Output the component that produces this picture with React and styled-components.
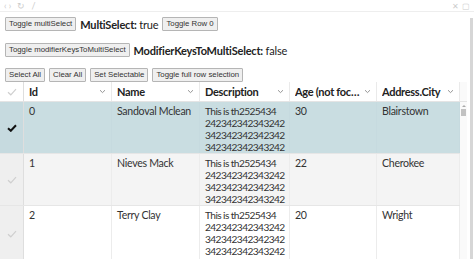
import React from "react";
import styled, { createGlobalStyle } from "styled-components";

const Global = createGlobalStyle`
  body {
    margin: 0;
    background: #fff;
    font-family: "Lato", "Noto Sans", sans-serif;
    color: #222;
    overflow: hidden;
  }
`;

const Page = styled.div`
  width: 474px;
  height: 259px;
  position: relative;
  overflow: hidden;
`;

const BrowserBar = styled.div`
  height: 11px;
  display: flex;
  align-items: center;
  gap: 6px;
  padding-left: 4px;
  border-bottom: 1px solid #eee;
  color: #ccc;
  font-size: 9px;
`;

const WindowIcons = styled.div`
  margin-left: auto;
  margin-right: 4px;
  display: flex;
  gap: 3px;
  color: #ccc;
  font-size: 8px;
`;

const PageScroll = styled.div`
  position: absolute;
  right: 1px;
  top: 18px;
  bottom: 0;
  width: 3px;
  background: #d6d6d6;
`;

const Controls = styled.div`
  padding: 5px 5px 0;
  display: flex;
  flex-direction: column;
`;

const Line = styled.div`
  display: flex;
  align-items: center;
  gap: 4px;
  height: 14px;
  margin-bottom: ${(p) => p.mb || 0}px;
`;

const Btn = styled.button`
  font-family: "Liberation Sans", Arial, sans-serif;
  font-size: 7.8px;
  color: #333;
  background: #efefef;
  border: 1px solid #b5b5b5;
  border-radius: 1px;
  height: 14px;
  padding: 0 3px;
  line-height: 12px;
  white-space: nowrap;
`;

const Status = styled.span`
  font-size: 11px;
  letter-spacing: -0.2px;
  color: #222;
  white-space: nowrap;
  b {
    font-weight: 700;
  }
`;

const Grid = styled.div`
  width: 467px;
  display: flex;
  flex-direction: column;
  position: relative;
`;

const cols = "24px 88px 88px 90px 87px 83px 7px";

const HeaderRow = styled.div`
  display: grid;
  grid-template-columns: ${cols};
  height: 19px;
  border-bottom: 1px solid #e4e4e4;
`;

const HeadCell = styled.div`
  display: flex;
  align-items: center;
  gap: 1px;
  padding: 0 5px 0 5px;
  font-size: 11px;
  letter-spacing: -0.3px;
  font-weight: 700;
  color: #222;
  border-right: 1px solid #eaeaea;
  min-width: 0;
  span {
    flex: 1;
    white-space: nowrap;
    overflow: hidden;
    text-overflow: ellipsis;
  }
`;

const SelCell = styled.div`
  display: flex;
  align-items: center;
  justify-content: center;
  background: ${(p) => (p.head ? "#fff" : p.selected ? "#c6dadf" : "#efefef")};
  border-right: 1px solid #dedede;
`;

const Row = styled.div`
  display: grid;
  grid-template-columns: ${cols};
  height: ${(p) => p.h}px;
  background: ${(p) => p.bg};
  border-bottom: 1px solid #e6e6e6;
`;

const Cell = styled.div`
  padding: 3px 3px 0 5px;
  font-size: ${(p) => (p.digits ? "10.2px" : "10.6px")};
  line-height: 12px;
  letter-spacing: ${(p) => (p.digits ? "-0.6px" : "-0.3px")};
  color: #333;
  border-right: 1px solid ${(p) => (p.selected ? "#c6dadf" : "#ececec")};
  white-space: pre;
  overflow: hidden;
`;

const ScrollGutter = styled.div`
  background: #fafafa;
`;

const ScrollTrack = styled.div`
  position: absolute;
  top: 102px;
  left: 460px;
  width: 7px;
  bottom: 0;
  background: #fafafa;
  display: flex;
  flex-direction: column;
  align-items: center;
`;

const ArrowUp = styled.div`
  margin-top: 3px;
  width: 0;
  height: 0;
  border-left: 2px solid transparent;
  border-right: 2px solid transparent;
  border-bottom: 2px solid #aaa;
`;

const Thumb = styled.div`
  margin-top: 2px;
  width: 5px;
  height: 7px;
  background: #c2c2c2;
`;

const Chevron = () => (
  <svg width="7" height="5" viewBox="0 0 7 5">
    <path d="M1 1.2 L3.5 3.6 L6 1.2" fill="none" stroke="#8a8a8a" strokeWidth="0.9" />
  </svg>
);

const Check = ({ dark }) => (
  <svg width="10" height="8" viewBox="0 0 10 8">
    <path
      d="M1 4.2 L3.8 6.8 L9 1.2"
      fill="none"
      stroke={dark ? "#111" : "#cfcfcf"}
      strokeWidth={dark ? 2 : 1.2}
    />
  </svg>
);

const desc = "This is th2525434\n242342342343242\n342342342342342\n342342342343242";

const rows = [
  { id: 0, name: "Sandoval Mclean", age: 30, city: "Blairstown", selected: true, bg: "#c9dde1", h: 51 },
  { id: 1, name: "Nieves Mack", age: 22, city: "Cherokee", bg: "#f4f4f4", h: 51 },
  { id: 2, name: "Terry Clay", age: 20, city: "Wright", bg: "#fff", h: 56 },
];

const headers = ["Id", "Name", "Description", "Age (not focusable)", "Address.City"];

export default function App() {
  return (
    <Page>
      <Global />
      <BrowserBar>
        <span>‹ ›</span>
        <span>↻</span>
        <span>/</span>
        <WindowIcons>
          <span>✕</span>
          <span>▢</span>
        </WindowIcons>
      </BrowserBar>
      <PageScroll />
      <Controls>
        <Line mb={12}>
          <Btn>Toggle multiSelect</Btn>
          <Status>
            <b>MultiSelect:</b> true
          </Status>
          <Btn>Toggle Row 0</Btn>
        </Line>
        <Line mb={11}>
          <Btn>Toggle modifierKeysToMultiSelect</Btn>
          <Status>
            <b>ModifierKeysToMultiSelect:</b> false
          </Status>
        </Line>
        <Line>
          <Btn>Select All</Btn>
          <Btn>Clear All</Btn>
          <Btn>Set Selectable</Btn>
          <Btn>Toggle full row selection</Btn>
        </Line>
      </Controls>
      <Grid>
        <HeaderRow>
          <SelCell head>
            <Check />
          </SelCell>
          {headers.map((h) => (
            <HeadCell key={h}>
              <span>{h}</span>
              <Chevron />
            </HeadCell>
          ))}
          <ScrollGutter />
        </HeaderRow>
        {rows.map((r) => (
          <Row key={r.id} bg={r.bg} h={r.h}>
            <SelCell selected={r.selected}>
              <Check dark={r.selected} />
            </SelCell>
            <Cell selected={r.selected}>{r.id}</Cell>
            <Cell selected={r.selected}>{r.name}</Cell>
            <Cell selected={r.selected} digits>
              {desc}
            </Cell>
            <Cell selected={r.selected}>{r.age}</Cell>
            <Cell selected={r.selected}>{r.city}</Cell>
            <ScrollGutter />
          </Row>
        ))}
      </Grid>
      <ScrollTrack>
        <ArrowUp />
        <Thumb />
      </ScrollTrack>
    </Page>
  );
}
